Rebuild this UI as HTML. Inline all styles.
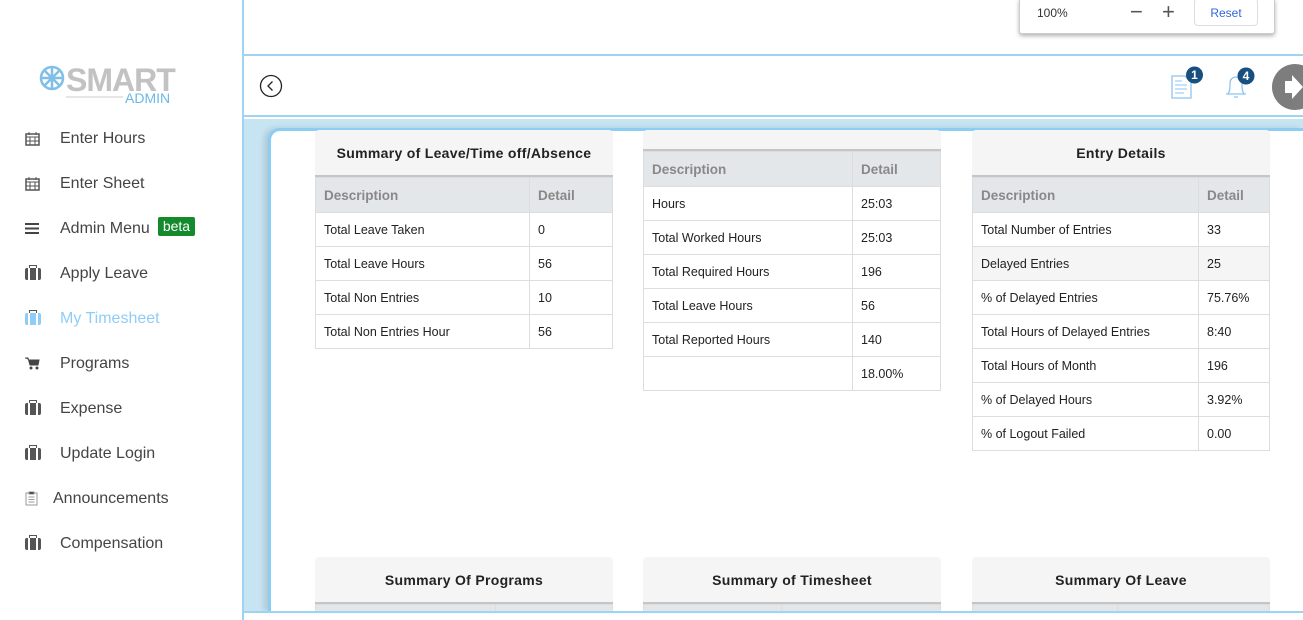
<!DOCTYPE html>
<html><head><meta charset="utf-8"><style>
*{margin:0;padding:0;box-sizing:border-box}
body{width:1303px;height:620px;overflow:hidden;background:#fff;font-family:"Liberation Sans",sans-serif;position:relative;color:#222}
.side{position:absolute;left:0;top:0;width:242px;height:620px;background:#fff}
.vline{position:absolute;left:242px;top:0;width:2px;height:620px;background:#9fd3f3}
.logo{position:absolute;left:38px;top:64px}
.nav{position:absolute;left:0;top:116px;width:242px}
.nav div{height:45px;line-height:45px;font-size:16px;color:#444;position:relative;padding-left:60px}
.nav i{position:absolute;left:25px;top:17px;width:16px;height:12px}
.brief{background:#555;border-radius:2px}
.brief:before{content:"";position:absolute;left:4px;top:-3px;width:6px;height:3px;border:1.5px solid #555;border-bottom:none}
.brief:after{content:"";position:absolute;left:3px;top:0;width:1.5px;height:12px;background:#fff;box-shadow:8px 0 #fff}
.beta{display:inline-block;background:#138a2b;color:#fff;font-size:14px;line-height:19px;padding:0 5px;border-radius:2px;margin-left:8px;vertical-align:middle;position:relative;top:-2px}
.hdrtop{position:absolute;left:244px;top:0;right:0;height:56px;border-bottom:2px solid #9fd3f3}
.hdr{position:absolute;left:244px;top:58px;right:0;height:59px;border-bottom:2px solid #9fd3f3;background:#fff}
.band{position:absolute;left:244px;top:119px;right:0;height:492px;background:#c7e4f3}
.bottom{position:absolute;left:244px;top:611px;right:0;height:2px;background:#9fd3f3}
.card{position:absolute;left:268px;top:128px;right:0;height:483px;background:#fff;border-top-left-radius:12px;border-left:3px solid #8ccdf2;border-top:3px solid #8ccdf2;box-shadow:-4px 0 6px rgba(0,0,0,.12)}
.tb{position:absolute;width:298px;font-size:12.5px;color:#222}
.tb .t{background:#f5f5f5;height:47px;line-height:47px;text-align:center;font-weight:bold;font-size:14px;letter-spacing:.3px;border-bottom:2px solid #c5c5c5;border-radius:4px 4px 0 0}
table{border-collapse:collapse;width:100%}
td,th{border:1px solid #ddd;height:34px;padding:0 8px;text-align:left}
th{background:#e4e7ea;color:#888;font-size:13.5px;height:35px}
.g td{background:#f5f5f5}
.zoom{position:absolute;left:1019px;top:-2px;width:256px;height:36px;background:#fff;border:1px solid #ccc;border-radius:3px;box-shadow:0 2px 4px rgba(0,0,0,.3);font-size:12px;color:#333}
</style></head><body>
<div class="side">
 <div class="logo"><svg width="145" height="42"><g stroke="#7fbfe8" stroke-width="2.5"><circle cx="14" cy="14" r="11" fill="none"/><path d="M14 3v22M3 14h22M6 6l16 16M22 6L6 22"/></g><text x="28" y="27" font-family="Liberation Sans" font-weight="bold" font-size="32" fill="#c2c2c2" letter-spacing="-1">SMART</text><line x1="28" y1="33" x2="85" y2="33" stroke="#ccc"/><text x="87" y="39" font-family="Liberation Sans" font-size="14" fill="#6cb8e6">ADMIN</text></svg></div>
 <div class="nav">
  <div><svg style="position:absolute;left:25px;top:15px" width="15" height="15"><rect x="1" y="3" width="13" height="11" fill="none" stroke="#555" stroke-width="1.5"/><path d="M1 6h13M5 6v8M10 6v8M1 10h13M4 1v3M11 1v3" stroke="#555"/></svg>Enter Hours</div>
  <div><svg style="position:absolute;left:25px;top:15px" width="15" height="15"><rect x="1" y="3" width="13" height="11" fill="none" stroke="#555" stroke-width="1.5"/><path d="M1 6h13M5 6v8M10 6v8M1 10h13M4 1v3M11 1v3" stroke="#555"/></svg>Enter Sheet</div>
  <div><svg style="position:absolute;left:25px;top:16px" width="15" height="13"><path d="M0 2h14M0 6.5h14M0 11h14" stroke="#444" stroke-width="2"/></svg>Admin Menu<span class="beta">beta</span></div>
  <div><i class="brief"></i>Apply Leave</div>
  <div style="color:#8fcdf7"><i class="brief" style="background:#8fcdf7"></i>My Timesheet</div>
  <div><svg style="position:absolute;left:25px;top:16px" width="15" height="13"><path d="M0 1h3l2 7h8l1-5H4" fill="#444" stroke="#444"/><circle cx="6" cy="11" r="1.5" fill="#444"/><circle cx="12" cy="11" r="1.5" fill="#444"/></svg>Programs</div>
  <div><i class="brief"></i>Expense</div>
  <div><i class="brief"></i>Update Login</div>
  <div style="padding-left:53px"><svg style="position:absolute;left:25px;top:15px" width="13" height="15"><rect x="1" y="2" width="11" height="12" fill="none" stroke="#999"/><path d="M3.5 6h6M3.5 8.5h6M3.5 11h6M4 1h5v2H4z" stroke="#999"/></svg>Announcements</div>
  <div><i class="brief"></i>Compensation</div>
 </div>
</div>
<div class="vline"></div>
<div class="hdrtop"></div>
<div class="zoom"><span style="position:absolute;left:17px;top:7px">100%</span><span style="position:absolute;left:110px;top:0px;font-size:22px;color:#555">−</span><span style="position:absolute;left:142px;top:0px;font-size:22px;color:#555">+</span><div style="position:absolute;left:174px;top:-1px;width:64px;height:28px;border:1px solid #ddd;border-radius:4px;color:#3366dd;text-align:center;line-height:28px">Reset</div></div>
<div class="hdr">
 <svg style="position:absolute;left:15px;top:16px" width="24" height="24"><circle cx="12" cy="12" r="10.5" fill="none" stroke="#222" stroke-width="1.3"/><path d="M13.5 7.5L9 12l4.5 4.5" fill="none" stroke="#222" stroke-width="1.3"/></svg>
 <svg style="position:absolute;left:926px;top:8px" width="40" height="34"><path d="M2 10h13l6 6v16H2z" fill="none" stroke="#8cc4f0" stroke-width="1.3"/><path d="M5 19h12M5 23h12M5 27h9M5 15h7" stroke="#8cc4f0"/><circle cx="24.5" cy="9" r="8.5" fill="#17507f"/><text x="24.5" y="13" text-anchor="middle" fill="#fff" font-size="12" font-weight="bold" font-family="Liberation Sans">1</text></svg>
 <svg style="position:absolute;left:978px;top:8px" width="40" height="34"><path d="M4 28h20M6 28c2-3 2-6 2-11a6 6 0 0 1 12 0c0 5 0 8 2 11M12 31h4" fill="none" stroke="#8cc4f0" stroke-width="1.3"/><circle cx="24" cy="10" r="8.5" fill="#17507f"/><text x="24" y="14" text-anchor="middle" fill="#fff" font-size="12" font-weight="bold" font-family="Liberation Sans">4</text></svg>
 <svg style="position:absolute;left:1028px;top:6px" width="31" height="46"><circle cx="23" cy="23" r="23" fill="#7d7d7d"/><path d="M13 17h7v-6l11 12-11 12v-6h-7z" fill="#fff"/></svg>
</div>
<div class="band"></div>
<div class="card"></div>
<div class="bottom"></div>

<div class="tb" style="left:315px;top:130px"><div class="t">Summary of Leave/Time off/Absence</div><table><tr><th style="width:214px">Description</th><th>Detail</th></tr><tr><td>Total Leave Taken</td><td>0</td></tr><tr><td>Total Leave Hours</td><td>56</td></tr><tr><td>Total Non Entries</td><td>10</td></tr><tr><td>Total Non Entries Hour</td><td>56</td></tr></table></div>

<div class="tb" style="left:643px;top:130px"><div class="t" style="height:21px"></div><table><tr><th style="width:209px">Description</th><th>Detail</th></tr><tr><td>Hours</td><td>25:03</td></tr><tr><td>Total Worked Hours</td><td>25:03</td></tr><tr><td>Total Required Hours</td><td>196</td></tr><tr><td>Total Leave Hours</td><td>56</td></tr><tr><td>Total Reported Hours</td><td>140</td></tr><tr><td></td><td>18.00%</td></tr></table></div>

<div class="tb" style="left:972px;top:130px"><div class="t">Entry Details</div><table><tr><th style="width:226px">Description</th><th>Detail</th></tr><tr><td>Total Number of Entries</td><td>33</td></tr><tr class="g"><td>Delayed Entries</td><td>25</td></tr><tr><td>% of Delayed Entries</td><td>75.76%</td></tr><tr><td>Total Hours of Delayed Entries</td><td>8:40</td></tr><tr><td>Total Hours of Month</td><td>196</td></tr><tr><td>% of Delayed Hours</td><td>3.92%</td></tr><tr><td>% of Logout Failed</td><td>0.00</td></tr></table></div>

<div style="position:absolute;left:0;top:557px;width:1303px;height:54px;overflow:hidden">
<div class="tb" style="left:315px;top:0"><div class="t">Summary Of Programs</div><table><tr><th style="width:180px"></th><th></th></tr></table></div>
<div class="tb" style="left:643px;top:0"><div class="t">Summary of Timesheet</div><table><tr><th style="width:138px"></th><th></th></tr></table></div>
<div class="tb" style="left:972px;top:0"><div class="t">Summary Of Leave</div><table><tr><th style="width:145px"></th><th></th></tr></table></div>
</div>
</body></html>
